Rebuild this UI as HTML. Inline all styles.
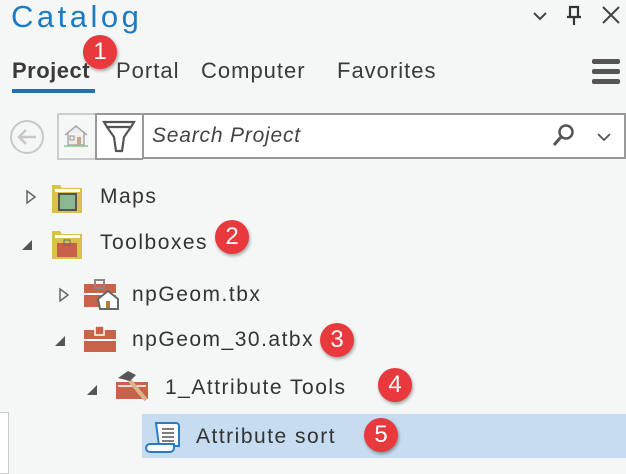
<!DOCTYPE html>
<html><head><meta charset="utf-8"><style>
*{margin:0;padding:0;box-sizing:border-box}
body{width:626px;height:471px;background:#f5f6f6;font-family:"Liberation Sans",sans-serif;position:relative;overflow:hidden;color:#333}
.a{position:absolute;white-space:nowrap}
.t{font-size:22px;color:#3a3a3a;letter-spacing:1px}
.r{font-size:21px;color:#333;letter-spacing:1.5px}
.b{position:absolute;width:34px;height:34px;border-radius:50%;background:#e8393d;color:#fff;font-size:24px;text-align:center;line-height:34px;box-shadow:1px 2px 3px rgba(0,0,0,.35)}
</style></head><body>
<div class="a" style="left:11px;top:-1px;font-size:31px;letter-spacing:3.5px;color:#1b7bc6">Catalog</div>
<svg class="a" style="left:530px;top:4px" width="96" height="24"><path d="M4 9l6 6 6-6" stroke="#444" stroke-width="2" fill="none"/><path d="M40 3h8v10h-8z M37 13h14 M44 13v8" stroke="#333" stroke-width="2.2" fill="none"/><path d="M73 3l16 16M89 3L73 19" stroke="#444" stroke-width="2" fill="none"/></svg>
<div class="a t" style="left:12px;top:58px;font-weight:bold;letter-spacing:0.5px">Project</div>
<div class="a" style="left:12px;top:89px;width:83px;height:4px;background:#1a73b9"></div>
<div class="a t" style="left:116px;top:58px">Portal</div>
<div class="a t" style="left:201px;top:58px">Computer</div>
<div class="a t" style="left:337px;top:58px">Favorites</div>
<div class="a" style="left:592px;top:59px;width:28px;height:5px;background:#555;border-radius:2px"></div>
<div class="a" style="left:592px;top:69px;width:28px;height:5px;background:#555;border-radius:2px"></div>
<div class="a" style="left:592px;top:79px;width:28px;height:5px;background:#555;border-radius:2px"></div>
<svg class="a" style="left:10px;top:119px" width="36" height="36"><circle cx="17" cy="18" r="16" stroke="#c8c8c8" stroke-width="2" fill="none"/><path d="M26 18H9M16 11l-7 7 7 7" stroke="#c8c8c8" stroke-width="2.5" fill="none"/></svg>
<div class="a" style="left:57px;top:113px;width:39px;height:47px;border:2px solid #ccc;border-right:none"></div>
<svg class="a" style="left:63px;top:124px" width="26" height="24"><path d="M2 11l11-9 11 9M5 9v12h16V9" stroke="#aaa" stroke-width="1.5" fill="#eee"/><rect x="7" y="12" width="4" height="4" fill="none" stroke="#999"/><rect x="14" y="13" width="4" height="8" fill="#c9a88a"/><path d="M1 22h24" stroke="#8c8" stroke-width="1.5"/></svg>
<div class="a" style="left:95px;top:113px;width:48px;height:47px;border:2px solid #999;border-right:none;background:#fff"></div>
<svg class="a" style="left:101px;top:119px" width="36" height="36"><path d="M3 3h30l-3 5H6z" fill="#fff" stroke="#555" stroke-width="2.2"/><path d="M6 8l7 10 2 14h6l2-14 7-10" fill="none" stroke="#555" stroke-width="2.2"/></svg>
<div class="a" style="left:142px;top:113px;width:484px;height:46px;border:2px solid #999;background:#fff"></div>
<div class="a" style="left:152px;top:124px;font-size:21px;font-style:italic;color:#444;letter-spacing:0.8px">Search Project</div>
<svg class="a" style="left:548px;top:122px" width="70" height="28"><circle cx="18" cy="10" r="6.5" stroke="#555" stroke-width="2.5" fill="none"/><path d="M13 15l-7 8" stroke="#555" stroke-width="3"/><path d="M50 12l6 6 6-6" stroke="#555" stroke-width="1.8" fill="none"/></svg>
<svg class="a" style="left:0;top:170px" width="626" height="301">
<path d="M27 21l8 6-8 6z" fill="none" stroke="#666" stroke-width="1.5"/>
<path d="M22 80l10-10v10z" fill="#555"/>
<path d="M60 119l8 6-8 6z" fill="none" stroke="#666" stroke-width="1.5"/>
<path d="M55 176l10-10v10z" fill="#555"/>
<path d="M87 225l10-10v10z" fill="#555"/>
<path d="M52 15h8l2 3h20v25H52z" fill="#d9c24a"/><rect x="55" y="19" width="25" height="3" fill="#fff"/><rect x="59" y="24" width="17" height="16" fill="#8ab893" stroke="#555" stroke-width="2"/>
<path d="M52 61h8l2 3h20v25H52z" fill="#d9c24a"/><rect x="55" y="65" width="25" height="3" fill="#fff"/><rect x="57" y="73" width="20" height="14" fill="#c8614a"/><rect x="64" y="70" width="6" height="5" fill="none" stroke="#666"/>
<rect x="84" y="114" width="32" height="23" fill="#c8634a"/><path d="M84 124h32" stroke="#fff" stroke-width="2"/><rect x="95" y="110" width="9" height="8" fill="none" stroke="#888" stroke-width="2"/><path d="M98 129l10-8 10 8v10H100z" fill="#fff" stroke="#666" stroke-width="2"/><rect x="106" y="131" width="4" height="7" fill="#b37a3e"/>
<rect x="84" y="160" width="32" height="22" fill="#c8634a"/><path d="M84 170h32" stroke="#fff" stroke-width="2"/><rect x="95" y="156" width="9" height="9" fill="#c8634a" stroke="#fff" stroke-width="1.5"/>
<rect x="116" y="212" width="32" height="17" fill="#c8634a"/><path d="M118 216h28" stroke="#fff" stroke-width="1.5"/><path d="M126 206l20 24" stroke="#d9b58a" stroke-width="4"/><path d="M118 208l10-7 8 4-6 6z" fill="#555"/>
<rect x="142" y="244" width="484" height="44" fill="#c6dcf0"/>
<path d="M156 253h20a3 3 0 0 1 3 3v20h-20z" fill="#fff" stroke="#2b7cc4" stroke-width="2"/><path d="M150 282h20a4 4 0 0 0 4-4v-4h-24a4 4 0 0 0 0 8z" fill="#fff" stroke="#2b7cc4" stroke-width="2"/><path d="M162 259h12M162 263h12M162 267h12M162 271h12" stroke="#555" stroke-width="1.5"/>
</svg>
<div class="a r" style="left:100px;top:185px">Maps</div>
<div class="a r" style="left:100px;top:231px">Toolboxes</div>
<div class="a r" style="left:132px;top:283px">npGeom.tbx</div>
<div class="a r" style="left:132px;top:328px">npGeom_30.atbx</div>
<div class="a r" style="left:165px;top:376px">1_Attribute Tools</div>
<div class="a r" style="left:196px;top:425px">Attribute sort</div>
<div class="a" style="left:-2px;top:412px;width:11px;height:62px;background:#fff;border:1px solid #ccc"></div>
<div class="b" style="left:83px;top:35px">1</div>
<div class="b" style="left:215px;top:220px">2</div>
<div class="b" style="left:320px;top:323px">3</div>
<div class="b" style="left:378px;top:368px">4</div>
<div class="b" style="left:364px;top:418px">5</div>
</body></html>
